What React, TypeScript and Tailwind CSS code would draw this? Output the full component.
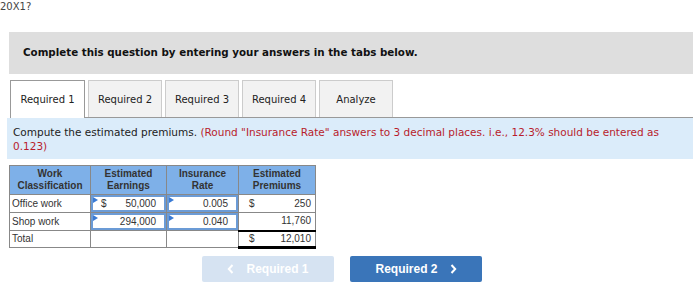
import React from "react";

const verdana = { fontFamily: '"DejaVu Sans", Verdana, sans-serif' };

function Tab({ label, active }: { label: string; active?: boolean }) {
  return (
    <div
      className={
        active
          ? "relative z-10 -mb-px flex h-[38px] w-[75px] items-center justify-center border border-b-0 border-[#999] bg-white text-[10px] text-[#222]"
          : "flex h-[37px] w-[74px] items-center justify-center border border-b-0 border-[#ccc] bg-[#f2f2f2] text-[10px] text-[#222]"
      }
    >
      {label}
    </div>
  );
}

function Flag() {
  return (
    <span className="absolute left-0 top-0 h-0 w-0 border-l-[5px] border-t-[3px] border-b-[3px] border-l-[#3a7bd5] border-t-transparent border-b-transparent" />
  );
}

function InputCell({ dollar, value }: { dollar?: boolean; value: string }) {
  return (
    <td className="border border-[#888] p-0">
      <div className="relative flex h-[17px] items-center border-2 border-[#6b9bd6] px-[8px]">
        <Flag />
        <span className="w-3">{dollar ? "$" : ""}</span>
        <span className="ml-auto">{value}</span>
      </div>
    </td>
  );
}

export default function App() {
  return (
    <div className="h-[288px] w-[693px] overflow-hidden bg-white text-[#333]" style={verdana}>
      <div className="pt-0 text-[10px] leading-[13px] text-[#444]">20X1?</div>

      <div className="ml-[9px] mt-[19px] flex h-[42px] items-center bg-[#dedede] pl-[14px] text-[10.3px] font-bold text-[#111]">
        Complete this question by entering your answers in the tabs below.
      </div>

      <div className="ml-[10px] mt-[6px] flex items-end gap-[3px] border-b border-[#999]">
        <Tab label="Required 1" active />
        <Tab label="Required 2" />
        <Tab label="Required 3" />
        <Tab label="Required 4" />
        <Tab label="Analyze" />
      </div>

      <p className="ml-[7px] bg-[#dbecfa] pb-[6px] pl-[6px] pr-[20px] pt-[7px] text-[10.5px] leading-[14px] text-[#222]">
        <span>Compute the estimated premiums.</span>{" "}
        <span className="text-[#b81c2c]">
          (Round "Insurance Rate" answers to 3 decimal places. i.e., 12.3% should be entered as 0.123)
        </span>
      </p>

      <table
        className="ml-[9px] mt-[6px] border-collapse text-[10px] leading-[12px] text-[#333]"
        style={{ fontFamily: '"Liberation Sans", Arial, sans-serif' }}
      >
        <colgroup>
          <col className="w-[81px]" />
          <col className="w-[76px]" />
          <col className="w-[72px]" />
          <col className="w-[77px]" />
        </colgroup>
        <thead>
          <tr className="h-[29px] bg-[#7eb0e8] font-bold text-[#333]">
            <th className="border border-[#888] text-center font-bold">Work<br />Classification</th>
            <th className="border border-[#888] text-center font-bold">Estimated<br />Earnings</th>
            <th className="border border-[#888] text-center font-bold">Insurance<br />Rate</th>
            <th className="border border-[#888] text-center font-bold">Estimated<br />Premiums</th>
          </tr>
        </thead>
        <tbody>
          <tr className="h-[18px]">
            <td className="border border-[#888] px-[2px]">Office work</td>
            <InputCell dollar value="50,000" />
            <InputCell value="0.005" />
            <td className="border border-[#888] px-[4px]">
              <div className="flex">
                <span className="pl-[6px]">$</span>
                <span className="ml-auto">250</span>
              </div>
            </td>
          </tr>
          <tr className="h-[18px]">
            <td className="border border-[#888] px-[2px]">Shop work</td>
            <InputCell value="294,000" />
            <InputCell value="0.040" />
            <td className="border border-[#888] px-[4px] text-right">11,760</td>
          </tr>
          <tr className="h-[17px]">
            <td className="border border-[#888] px-[2px]">Total</td>
            <td className="border border-[#888]" />
            <td className="border border-[#888]" />
            <td className="border border-[#888] border-b-[3px] border-t-2 border-b-black border-t-black px-[4px]">
              <div className="flex">
                <span className="pl-[6px]">$</span>
                <span className="ml-auto">12,010</span>
              </div>
            </td>
          </tr>
        </tbody>
      </table>

      <div
        className="mt-[7px] flex gap-[16px] pl-[202px] text-[12px] font-bold text-white"
        style={{ fontFamily: '"Liberation Sans", Arial, sans-serif' }}
      >
        <div className="flex h-[26px] w-[132px] items-center justify-center gap-[12px] rounded-[2px] bg-[#d6e3f2]">
          <svg width="7" height="10" viewBox="0 0 7 10" fill="none" stroke="white" strokeWidth="2">
            <path d="M5.5 1 L1.8 5 L5.5 9" />
          </svg>
          <span>Required 1</span>
        </div>
        <div className="flex h-[26px] w-[132px] items-center justify-center gap-[12px] rounded-[2px] bg-[#3a75b9]">
          <span>Required 2</span>
          <svg width="7" height="10" viewBox="0 0 7 10" fill="none" stroke="white" strokeWidth="2">
            <path d="M1.5 1 L5.2 5 L1.5 9" />
          </svg>
        </div>
      </div>
    </div>
  );
}
